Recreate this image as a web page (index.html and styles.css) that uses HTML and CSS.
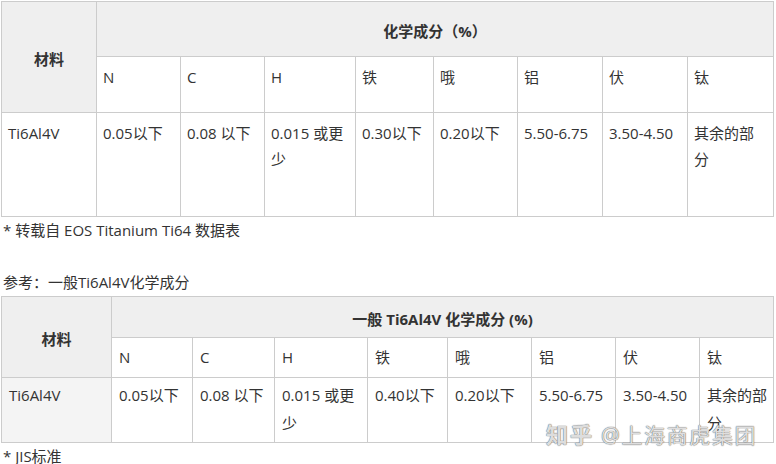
FILE: index.html
```html
<!DOCTYPE html>
<html lang="zh-CN">
<head>
<meta charset="utf-8">
<link rel="stylesheet" href="styles.css">
</head>
<body>
<div class="page">
  <table class="tbl tbl-one">
    <colgroup>
      <col style="width:95px"><col style="width:84px"><col style="width:84px"><col style="width:91px"><col style="width:78px"><col style="width:84px"><col style="width:85px"><col style="width:85px"><col style="width:86px">
    </colgroup>
    <tr class="r-head">
      <th rowspan="2" class="mat">材料</th>
      <th colspan="8" class="title">化学成分（%）</th>
    </tr>
    <tr class="r-elem">
      <td>N</td><td>C</td><td>H</td><td>铁</td><td>哦</td><td>铝</td><td>伏</td><td>钛</td>
    </tr>
    <tr class="r-data">
      <td>Ti6Al4V</td><td>0.05以下</td><td>0.08 以下</td><td>0.015 或更少</td><td>0.30以下</td><td>0.20以下</td><td>5.50-6.75</td><td>3.50-4.50</td><td>其余的部分</td>
    </tr>
  </table>
  <p class="note">* 转载自 EOS Titanium Ti64 数据表</p>
  <p class="note ref">参考：一般Ti6Al4V化学成分</p>
  <table class="tbl tbl-two">
    <colgroup>
      <col style="width:110px"><col style="width:81px"><col style="width:82px"><col style="width:93px"><col style="width:80px"><col style="width:84px"><col style="width:84px"><col style="width:84px"><col style="width:74px">
    </colgroup>
    <tr class="r-head">
      <th rowspan="2" class="mat">材料</th>
      <th colspan="8" class="title">一般 Ti6Al4V 化学成分 (%)</th>
    </tr>
    <tr class="r-elem">
      <td>N</td><td>C</td><td>H</td><td>铁</td><td>哦</td><td>铝</td><td>伏</td><td>钛</td>
    </tr>
    <tr class="r-data">
      <td class="name">Ti6Al4V</td><td>0.05以下</td><td>0.08 以下</td><td>0.015 或更少</td><td>0.40以下</td><td>0.20以下</td><td>5.50-6.75</td><td>3.50-4.50</td><td>其余的部分</td>
    </tr>
  </table>
  <p class="note last">* JIS标准</p>
  <div class="watermark"><span class="zh">知乎</span> @上海商虎集团</div>
</div>
</body>
</html>
```

FILE: styles.css
```css
html, body {
  margin: 0;
  padding: 0;
  background: #fff;
}
body {
  font-family: "Open Sans", "Noto Sans CJK SC", sans-serif;
  font-size: 15px;
  color: #333;
}
.page {
  position: relative;
  width: 776px;
  height: 464px;
  padding: 1px 0 0 1px;
  box-sizing: border-box;
  overflow: hidden;
}
.tbl {
  border-collapse: collapse;
  table-layout: fixed;
  width: 772px;
}
.tbl th, .tbl td {
  border: 1px solid #ccc;
  text-align: left;
  overflow: hidden;
}
.tbl th {
  background: #efefef;
  font-weight: bold;
  text-align: center;
  vertical-align: middle;
  padding: 3px 0 0;
}
/* table one */
.tbl-one .r-head { height: 55px; }
.tbl-one .r-elem { height: 56px; }
.tbl-one .r-data { height: 104px; }
.tbl-one td {
  vertical-align: top;
  line-height: 26px;
  padding: 7px 6px 0 6px;
}
/* table two */
.tbl-two .r-head { height: 41px; }
.tbl-two .r-elem { height: 40px; }
.tbl-two .r-data { height: 65px; }
.tbl-two td {
  vertical-align: top;
  line-height: 27.5px;
  padding: 6px 2px 0 7px;
}
.tbl-two .r-data td { padding-top: 4px; }
.tbl-two td.name { background: #f4f4f4; }
.note {
  margin: 0;
  padding-left: 2px;
  line-height: 27px;
}
.ref {
  margin-top: 25px;
}
.last {
  line-height: 20px;
  margin-top: 3px;
}
.watermark {
  position: absolute;
  left: 546px;
  top: 421px;
  font-size: 21px;
  line-height: 26px;
  color: rgba(255, 255, 255, 0.8);
  text-shadow: 0 0 1px #666, 0 0 1px #666;
  white-space: nowrap;
  letter-spacing: 1.6px;
}
.watermark .zh {
  font-size: 22px;
  font-weight: bold;
  letter-spacing: 2px;
}
```
